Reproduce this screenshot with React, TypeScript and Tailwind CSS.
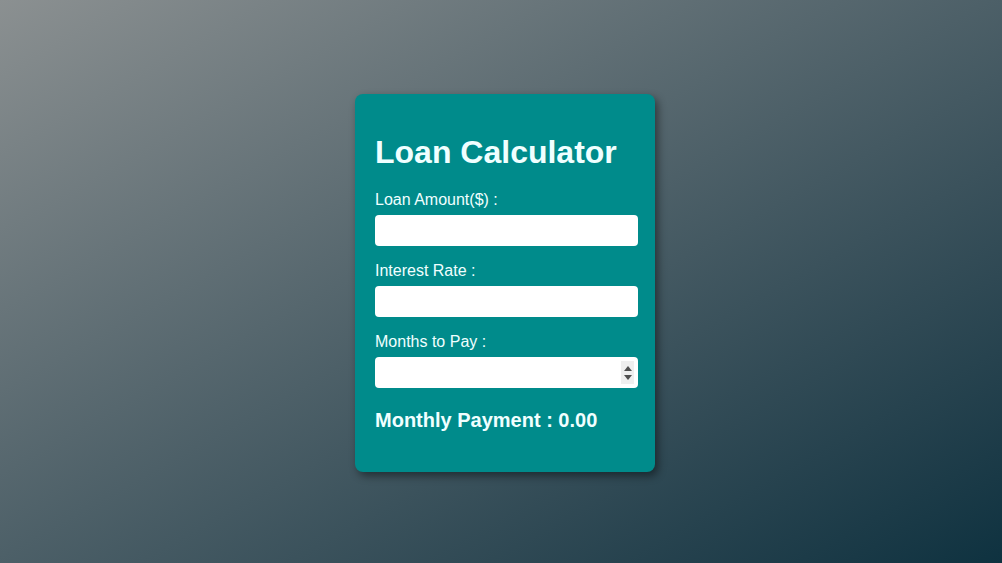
import { useState } from 'react';

function Field({
  label,
  value,
  onChange,
  first = false,
  spinner = false,
}: {
  label: string;
  value: string;
  onChange: (v: string) => void;
  first?: boolean;
  spinner?: boolean;
}) {
  return (
    <div className={first ? 'mt-5' : 'mt-4'}>
      <label className="mb-[6px] block text-[16px] leading-[18px]">{label}</label>
      <div className="relative">
        <input
          type="text"
          inputMode="decimal"
          value={value}
          onChange={(e) => onChange(e.target.value)}
          className="block h-[31px] w-full rounded-[4px] bg-white px-2 text-[16px] text-black outline-none"
        />
        {spinner && (
          <div className="absolute top-[4px] right-[4px] flex h-[23px] w-[13px] flex-col items-center justify-center gap-[4px] bg-[#efefef]">
            <span className="h-0 w-0 border-x-[4px] border-b-[5px] border-x-transparent border-b-[#505050]" />
            <span className="h-0 w-0 border-x-[4px] border-t-[5px] border-x-transparent border-t-[#505050]" />
          </div>
        )}
      </div>
    </div>
  );
}

export default function App() {
  const [amount, setAmount] = useState('');
  const [rate, setRate] = useState('');
  const [months, setMonths] = useState('');

  const p = parseFloat(amount);
  const r = parseFloat(rate) / 100 / 12;
  const n = parseFloat(months);
  let payment = 0;
  if (p > 0 && n > 0) {
    payment = r > 0 ? (p * r) / (1 - Math.pow(1 + r, -n)) : p / n;
  }

  return (
    <div className="flex min-h-[563px] w-full items-center justify-center bg-gradient-to-br from-[#8b9091] to-[#0e3240] pt-[3px] pl-2 font-['Liberation_Sans',Arial,sans-serif]">
      <div className="w-[300px] rounded-[8px] bg-[#008b8b] pt-10 pr-[17px] pb-10 pl-5 text-[#f0ffff] shadow-[3px_4px_8px_rgba(0,0,0,0.45)]">
        <h1 className="text-[32px] leading-[37px] font-bold">Loan Calculator</h1>
        <Field label="Loan Amount($) :" value={amount} onChange={setAmount} first />
        <Field label="Interest Rate :" value={rate} onChange={setRate} />
        <Field label="Months to Pay :" value={months} onChange={setMonths} spinner />
        <p className="mt-[21px] text-[20px] leading-[23px] font-bold">
          Monthly Payment : {payment.toFixed(2)}
        </p>
      </div>
    </div>
  );
}
